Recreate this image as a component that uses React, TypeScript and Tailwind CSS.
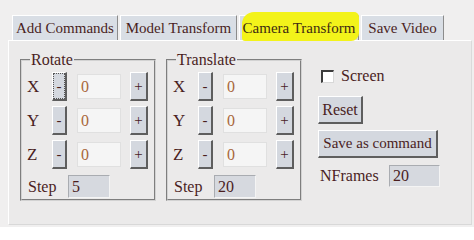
import React from "react";

const Btn = ({
  label,
  w,
  h,
  focus,
  className = "",
}: {
  label: string;
  w: string;
  h: string;
  focus?: boolean;
  className?: string;
}) => (
  <div
    className={`${w} ${h} ${className} shrink-0 bg-[#d4d8df] border-t border-l border-t-white border-l-white border-r-2 border-b-2 border-r-[#5e5e5e] border-b-[#5e5e5e] flex items-center justify-center text-[15px] leading-none`}
  >
    {focus ? (
      <span className="w-full h-full border border-dotted border-[#555] flex items-center justify-center">
        {label}
      </span>
    ) : (
      label
    )}
  </div>
);

const Entry = ({ value, w, h, dark, className = "" }: { value: string; w: string; h: string; dark?: boolean; className?: string }) => (
  <div
    className={`${w} ${h} ${className} shrink-0 flex items-center pl-[3px] text-[16px] leading-none ${
      dark
        ? "bg-[#d6d9df] border-t border-l border-t-[#a9acb1] border-l-[#a9acb1] border-r border-b border-r-[#f4f4f4] border-b-[#f4f4f4] text-[#4a1e1e]"
        : "bg-[#f5f5f5] border border-[#e0e0e0] text-[#a8673a]"
    }`}
  >
    {value}
  </div>
);

const Group = ({ title, step, focusFirst }: { title: string; step: string; focusFirst?: boolean }) => (
  <fieldset className="w-[136px] h-[150px] shrink-0 border-2 [border-style:groove] border-[#d2d2d2] m-0 p-0 pl-[5px]">
    <legend className="ml-[3px] px-[1px] text-[16px] leading-[17px]">{title}</legend>
    <div className="flex flex-col mt-[4px] gap-[5px]">
      {["X", "Y", "Z"].map((axis, i) => (
        <div key={axis} className="flex items-center h-[29px]">
          <div className="w-[25px] text-[17px] leading-none">{axis}</div>
          <Btn label="-" w="w-[15px]" h="h-[29px]" focus={focusFirst && i === 0} />
          <Entry value="0" w="w-[44px]" h="h-[25px]" className="ml-[10px]" />
          <Btn label="+" w="w-[18px]" h="h-[29px]" className="ml-[9px]" />
        </div>
      ))}
      <div className="flex items-center h-[23px] mt-[1px]">
        <div className="w-[41px] pl-[1px] text-[16px] leading-none">Step</div>
        <Entry value={step} w="w-[42px]" h="h-[23px]" dark />
      </div>
    </div>
  </fieldset>
);

export default function App() {
  return (
    <div className="w-[474px] h-[227px] bg-[#f0efef] pt-[15px] overflow-hidden font-['Liberation_Serif',serif] text-[#4a1e1e]">
      <div className="flex pl-[12px] gap-[2px] h-[25px]">
        <div className="w-[106px] h-[25px] bg-[#d9dee5] border-t border-l border-white border-r border-r-[#8c8c8c] flex items-center justify-center text-[15px] leading-none">
          Add Commands
        </div>
        <div className="w-[117px] h-[25px] bg-[#d9dee5] border-t border-l border-white border-r border-r-[#8c8c8c] flex items-center justify-center text-[15px] leading-none">
          Model Transform
        </div>
        <div className="relative w-[120px] h-[25px] bg-[#d9dee5] border-t border-l border-white border-r border-r-[#8c8c8c] flex items-center justify-center text-[15px] leading-none">
          <span className="absolute left-[2px] right-[-1px] top-[-4px] bottom-[-1px] bg-[#f3f31a] rounded-tl-[12px] rounded-tr-[5px] rounded-bl-[3px] rounded-br-[8px]" />
          <span className="relative text-[#3e2a12]">Camera Transform</span>
        </div>
        <div className="w-[83px] h-[25px] bg-[#d9dee5] border-t border-l border-white border-r border-r-[#8c8c8c] flex items-center justify-center text-[15px] leading-none">
          Save Video
        </div>
      </div>
      <div className="ml-[8px] w-[464px] h-[185px] bg-[#ebeaea] border-t border-l border-white border-r border-r-[#dadada] border-b border-b-[#d8d8d8] flex pl-[11px] pt-[10px]">
        <Group title="Rotate" step="5" focusFirst />
        <div className="w-[10px] shrink-0" />
        <Group title="Translate" step="20" />
        <div className="ml-[16px] flex flex-col items-start">
          <div className="flex items-center h-[14px] mt-[18px] pl-[3px]">
            <div className="w-[13px] h-[13px] bg-white border-t-2 border-l-2 border-t-[#3c3c3c] border-l-[#3c3c3c] border-r border-b border-r-[#d8d8d8] border-b-[#d8d8d8]" />
            <span className="ml-[7px] text-[16px] leading-none">Screen</span>
          </div>
          <Btn label="Reset" w="w-[45px]" h="h-[28px]" className="mt-[13px] !text-[16px]" />
          <Btn label="Save as command" w="w-[120px]" h="h-[28px]" className="mt-[6px]" />
          <div className="flex items-center mt-[7px] h-[22px]">
            <div className="w-[71px] pl-[2px] text-[16px] leading-none">NFrames</div>
            <Entry value="20" w="w-[51px]" h="h-[22px]" dark />
          </div>
        </div>
      </div>
    </div>
  );
}
